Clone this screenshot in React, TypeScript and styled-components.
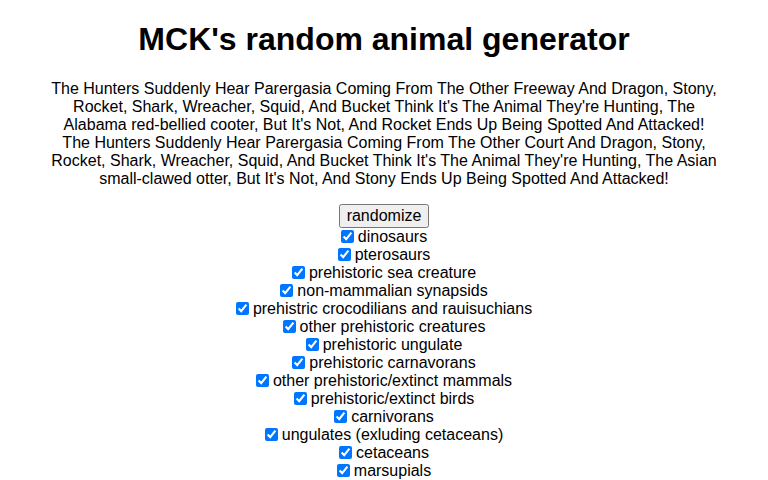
import React from "react";
import styled, { createGlobalStyle } from "styled-components";

const GlobalStyle = createGlobalStyle`
  body {
    margin: 0 8px;
    background: #ffffff;
    color: #000000;
    font-family: "Liberation Sans", Arial, sans-serif;
  }
`;

const Wrapper = styled.div`
  text-align: center;
`;

const Title = styled.h1`
  font-size: 32px;
  font-weight: bold;
  margin: 21.44px 0;
`;

const Story = styled.p`
  font-size: 16px;
  margin: 16px 0;
  padding: 0 36px;
`;

const Controls = styled.div`
  font-size: 16px;
`;

const RandomButton = styled.button`
  font-family: "Liberation Sans", Arial, sans-serif;
  font-size: 16px;
  padding: 1px 6px;
`;

const Option = styled.label`
  display: block;
  line-height: 18px;
`;

const Check = styled.input`
  margin: 0 4px 0 0;
  vertical-align: -1px;
`;

const categories = [
  "dinosaurs",
  "pterosaurs",
  "prehistoric sea creature",
  "non-mammalian synapsids",
  "prehistric crocodilians and rauisuchians",
  "other prehistoric creatures",
  "prehistoric ungulate",
  "prehistoric carnavorans",
  "other prehistoric/extinct mammals",
  "prehistoric/extinct birds",
  "carnivorans",
  "ungulates (exluding cetaceans)",
  "cetaceans",
  "marsupials",
];

const App = () => (
  <Wrapper>
    <GlobalStyle />
    <Title>MCK's random animal generator</Title>
    <Story>
      The Hunters Suddenly Hear Parergasia Coming From The Other Freeway And
      Dragon, Stony, Rocket, Shark, Wreacher, Squid, And Bucket Think It's The
      Animal They're Hunting, The Alabama red-bellied cooter, But It's Not, And
      Rocket Ends Up Being Spotted And Attacked!
      <br />
      The Hunters Suddenly Hear Parergasia Coming From The Other Court And
      Dragon, Stony, Rocket, Shark, Wreacher, Squid, And Bucket Think It's The
      Animal They're Hunting, The Asian small-clawed otter, But It's Not, And
      Stony Ends Up Being Spotted And Attacked!
    </Story>
    <Controls>
      <RandomButton type="button">randomize</RandomButton>
      {categories.map((name) => (
        <Option key={name}>
          <Check type="checkbox" defaultChecked />
          {name}
        </Option>
      ))}
    </Controls>
  </Wrapper>
);

export default App;
